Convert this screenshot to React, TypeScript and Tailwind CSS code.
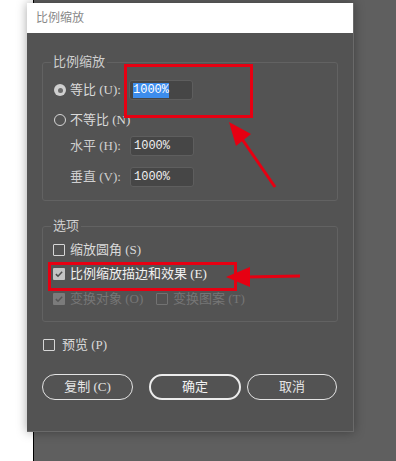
import React from 'react';

const font = "font-['Liberation_Serif','Noto_Sans_CJK_SC',sans-serif]";

function Radio({ on }: { on?: boolean }) {
  return on ? (
    <span className="flex size-[12px] items-center justify-center rounded-full bg-[#cfcfcf]">
      <span className="size-[5px] rounded-full bg-[#6a6a6a]" />
    </span>
  ) : (
    <span className="size-[12px] rounded-full border border-[#d6d6d6]" />
  );
}

function Check({ on, disabled }: { on?: boolean; disabled?: boolean }) {
  if (on) {
    return (
      <span
        className={`flex size-[12px] shrink-0 items-center justify-center rounded-[1px] ${
          disabled ? 'bg-[#7b7b7b]' : 'bg-[#c4c4c4]'
        }`}
      >
        <svg viewBox="0 0 12 12" className="size-[10px]">
          <path
            d="M2.2 6.2 L4.8 8.6 L9.8 3.2"
            fill="none"
            stroke={disabled ? '#575757' : '#4e4e4e'}
            strokeWidth="1.8"
          />
        </svg>
      </span>
    );
  }
  return (
    <span
      className={`block size-[12px] shrink-0 rounded-[1px] border ${
        disabled ? 'border-[#727272]' : 'border-[#d6d6d6]'
      }`}
    />
  );
}

function NumberField({ selected }: { selected?: boolean }) {
  return (
    <div className="flex h-[20px] w-[64px] items-center rounded-[3px] border border-[#5e5e5e] bg-[#464646] pl-[3px] font-['Liberation_Mono',monospace] text-[12px] text-[#f0f0f0]">
      <span className={selected ? 'bg-[#3d8ded] leading-[15px] text-white' : 'leading-[15px]'}>
        1000%
      </span>
    </div>
  );
}

export default function App() {
  return (
    <div className={`relative h-[461px] w-[396px] overflow-hidden ${font}`}>
      <div className="flex h-full">
        <div className="w-[33px] bg-white" />
        <div className="w-px bg-black" />
        <div className="flex-1 bg-[#5f5f5f]" />
      </div>

      {/* dialog window */}
      <div className="absolute left-[27px] top-[3px] h-[429px] w-[327px] border-r border-b border-[#6a6a6a] bg-[#535353] shadow-[0_0_10px_rgba(0,0,0,0.35)]">
        <div className="flex h-[30px] items-center bg-white pl-[9px] text-[12px] text-[#888888]">
          比例缩放
        </div>

        <div className="px-[15px] text-[13px] text-[#dadada]">
          <fieldset className="mt-[20px] rounded-[3px] border border-[#626262] px-[11px] pb-[13px]">
            <legend className="-ml-[3px] px-[2px] leading-[18px] text-[#cfcfcf]">比例缩放</legend>
            <div className="mt-[9px] flex h-[20px] items-center">
              <Radio on />
              <span className="ml-[4px] w-[59px]">等比 (U):</span>
              <NumberField selected />
            </div>
            <div className="mt-[10px] flex h-[20px] items-center">
              <Radio />
              <span className="ml-[4px]">不等比 (N)</span>
            </div>
            <div className="mt-[6px] flex h-[20px] items-center pl-[16px]">
              <span className="w-[60px] text-[#cfcfcf]">水平 (H):</span>
              <NumberField />
            </div>
            <div className="mt-[11px] flex h-[20px] items-center pl-[16px]">
              <span className="w-[60px] text-[#cfcfcf]">垂直 (V):</span>
              <NumberField />
            </div>
          </fieldset>

          <fieldset className="mt-[16px] rounded-[3px] border border-[#626262] px-[10px] pb-[13px]">
            <legend className="-ml-[2px] px-[2px] leading-[18px] text-[#cfcfcf]">选项</legend>
            <div className="mt-[6px] flex h-[18px] items-center gap-[5px]">
              <Check />
              <span>缩放圆角 (S)</span>
            </div>
            <div className="mt-[6px] flex h-[18px] items-center gap-[5px]">
              <Check on />
              <span className="text-[#f0f0f0]">比例缩放描边和效果 (E)</span>
            </div>
            <div className="mt-[7px] flex h-[18px] items-center text-[#767676]">
              <Check on disabled />
              <span className="ml-[5px] w-[86px]">变换对象 (O)</span>
              <Check disabled />
              <span className="ml-[5px]">变换图案 (T)</span>
            </div>
          </fieldset>

          <div className="mt-[14px] flex h-[18px] items-center gap-[7px] pl-px">
            <Check />
            <span>预览 (P)</span>
          </div>

          <div className="mt-[20px] flex">
            <button className="h-[26px] w-[91px] rounded-full border border-[#e4e4e4] text-[13px] text-[#e4e4e4]">
              复制 (C)
            </button>
            <button className="ml-[16px] h-[26px] w-[92px] rounded-full border-2 border-[#ececec] text-[13px] text-[#f2f2f2]">
              确定
            </button>
            <button className="ml-[6px] h-[26px] w-[90px] rounded-full border border-[#e4e4e4] text-[13px] text-[#e4e4e4]">
              取消
            </button>
          </div>
        </div>
      </div>

      {/* red annotations */}
      <div className="absolute left-[124px] top-[64px] h-[54px] w-[129px] border-[3px] border-[#e60012]" />
      <div className="absolute left-[48px] top-[262px] h-[29px] w-[189px] border-[3px] border-[#e60012]" />
      <svg className="absolute left-0 top-0" width="396" height="461">
        <line x1="275" y1="187" x2="242" y2="139" stroke="#e60012" strokeWidth="3" />
        <polygon points="229,122 251,134 236,146" fill="#e60012" />
        <line x1="300" y1="276" x2="246" y2="277" stroke="#e60012" strokeWidth="3" />
        <polygon points="226,277 250,267 250,287" fill="#e60012" />
      </svg>
    </div>
  );
}
